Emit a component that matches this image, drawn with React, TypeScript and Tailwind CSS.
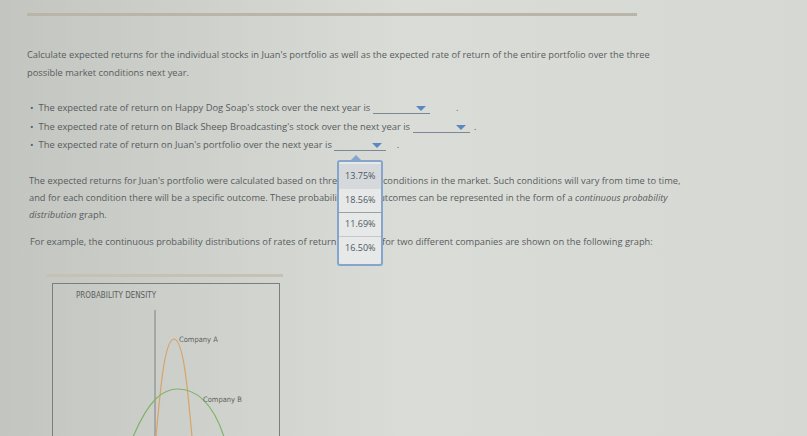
import React from "react";

function Dropdown({ width }: { width: string }) {
  return (
    <span className={`relative inline-block h-[10px] ${width} border-b border-[#7d8896] align-[-3px]`}>
      <span className="absolute right-[4px] top-[2px] h-0 w-0 border-x-[5px] border-t-[5px] border-x-transparent border-t-[#5b87c2]" />
    </span>
  );
}

function Graph() {
  return (
    <div className="ml-[47px] mt-[24px] w-[236px]">
      <div className="h-[3px] w-full bg-[#c6c1b4]" />
      <div className="ml-[5px] mt-[6px] h-[160px] w-[228px] border-l border-r border-t border-[#7b7e7c]">
        <svg width="228" height="160" viewBox="0 0 228 160" className="block">
          <text x="23" y="14" fontSize="8" fill="#5c6061" fontFamily="'DejaVu Sans Condensed', 'Open Sans', sans-serif">
            PROBABILITY DENSITY
          </text>
          <line x1="102" y1="26" x2="102" y2="160" stroke="#6d706e" strokeWidth="0.8" />
          <path d="M 103 153 C 107 110, 111 56, 121 55 C 131 56, 135 110, 139 153" fill="none" stroke="#d9a36a" strokeWidth="1.2" />
          <path d="M 80 153 C 96 115, 110 105, 125 105 C 142 105, 160 118, 171 153" fill="none" stroke="#7fb56a" strokeWidth="1.2" />
          <text x="126" y="58" fontSize="7.5" fill="#5f6362" fontFamily="'DejaVu Sans Condensed', 'Open Sans', sans-serif">
            Company A
          </text>
          <text x="150" y="118" fontSize="7.5" fill="#5f6362" fontFamily="'DejaVu Sans Condensed', 'Open Sans', sans-serif">
            Company B
          </text>
        </svg>
      </div>
    </div>
  );
}

export default function App() {
  return (
    <div className="relative h-[436px] w-[807px] overflow-hidden bg-gradient-to-r from-[#c2c5c0] via-[#dadcd7] to-[#d6d9d3] font-['Open_Sans',sans-serif] text-[9.3px] text-[#585c5e]">
      <div className="ml-[27px] pt-[13px]">
        <div className="h-[3px] w-[610px] bg-[#b9b5a9]" />
      </div>

      <p className="ml-[27px] mt-[30px] w-[640px] leading-[18px]">
        Calculate expected returns for the individual stocks in Juan's portfolio as well as the expected rate of return of the entire portfolio over the three possible market conditions next year.
      </p>

      <ul className="ml-[30px] mt-[17px] text-[9.4px] leading-[18.5px]">
        <li className="flex items-baseline gap-[5px]">
          <span>•</span>
          <span>
            The expected rate of return on Happy Dog Soap's stock over the next year is{" "}
            <Dropdown width="w-[57px]" /> <span className="ml-[24px]">.</span>
          </span>
        </li>
        <li className="flex items-baseline gap-[5px]">
          <span>•</span>
          <span>
            The expected rate of return on Black Sheep Broadcasting's stock over the next year is{" "}
            <Dropdown width="w-[57px]" /> <span className="ml-[2px]">.</span>
          </span>
        </li>
        <li className="flex items-baseline gap-[5px]">
          <span>•</span>
          <span>
            The expected rate of return on Juan's portfolio over the next year is{" "}
            <span className="relative inline-block">
              <Dropdown width="w-[52px]" />
              <div className="absolute left-[3px] top-[19px] z-10 w-[46px]">
                <div className="ml-[14px] h-0 w-0 border-x-[5px] border-b-[5px] border-x-transparent border-b-[#86a5cc]" />
                <div className="h-[106px] rounded-[3px] border-2 border-[#86a5cc] bg-[#e7e9e9] pt-[2px] text-[9px] text-[#4d5862]">
                  <div className="flex h-[24px] items-center justify-center bg-[#d5d9db]">13.75%</div>
                  <div className="flex h-[24px] items-center justify-center border-t border-[#d5d9db]">18.56%</div>
                  <div className="flex h-[24px] items-center justify-center border-t border-[#98a0a6]">11.69%</div>
                  <div className="flex h-[24px] items-center justify-center border-t border-[#c4c8cb]">16.50%</div>
                </div>
              </div>
            </span>{" "}
            <span className="ml-[8px]">.</span>
          </span>
        </li>
      </ul>

      <p className="ml-[29px] mt-[17px] w-[655px] leading-[17px]">
        The expected returns for Juan's portfolio were calculated based on three possible conditions in the market. Such conditions will vary from time to time, and for each condition there will be a specific outcome. These probabilities and outcomes can be represented in the form of a <i>continuous probability distribution</i> graph.
      </p>

      <p className="ml-[30px] mt-[10px] leading-[17px]">
        For example, the continuous probability distributions of rates of return on stocks for two different companies are shown on the following graph:
      </p>

      <Graph />
    </div>
  );
}
